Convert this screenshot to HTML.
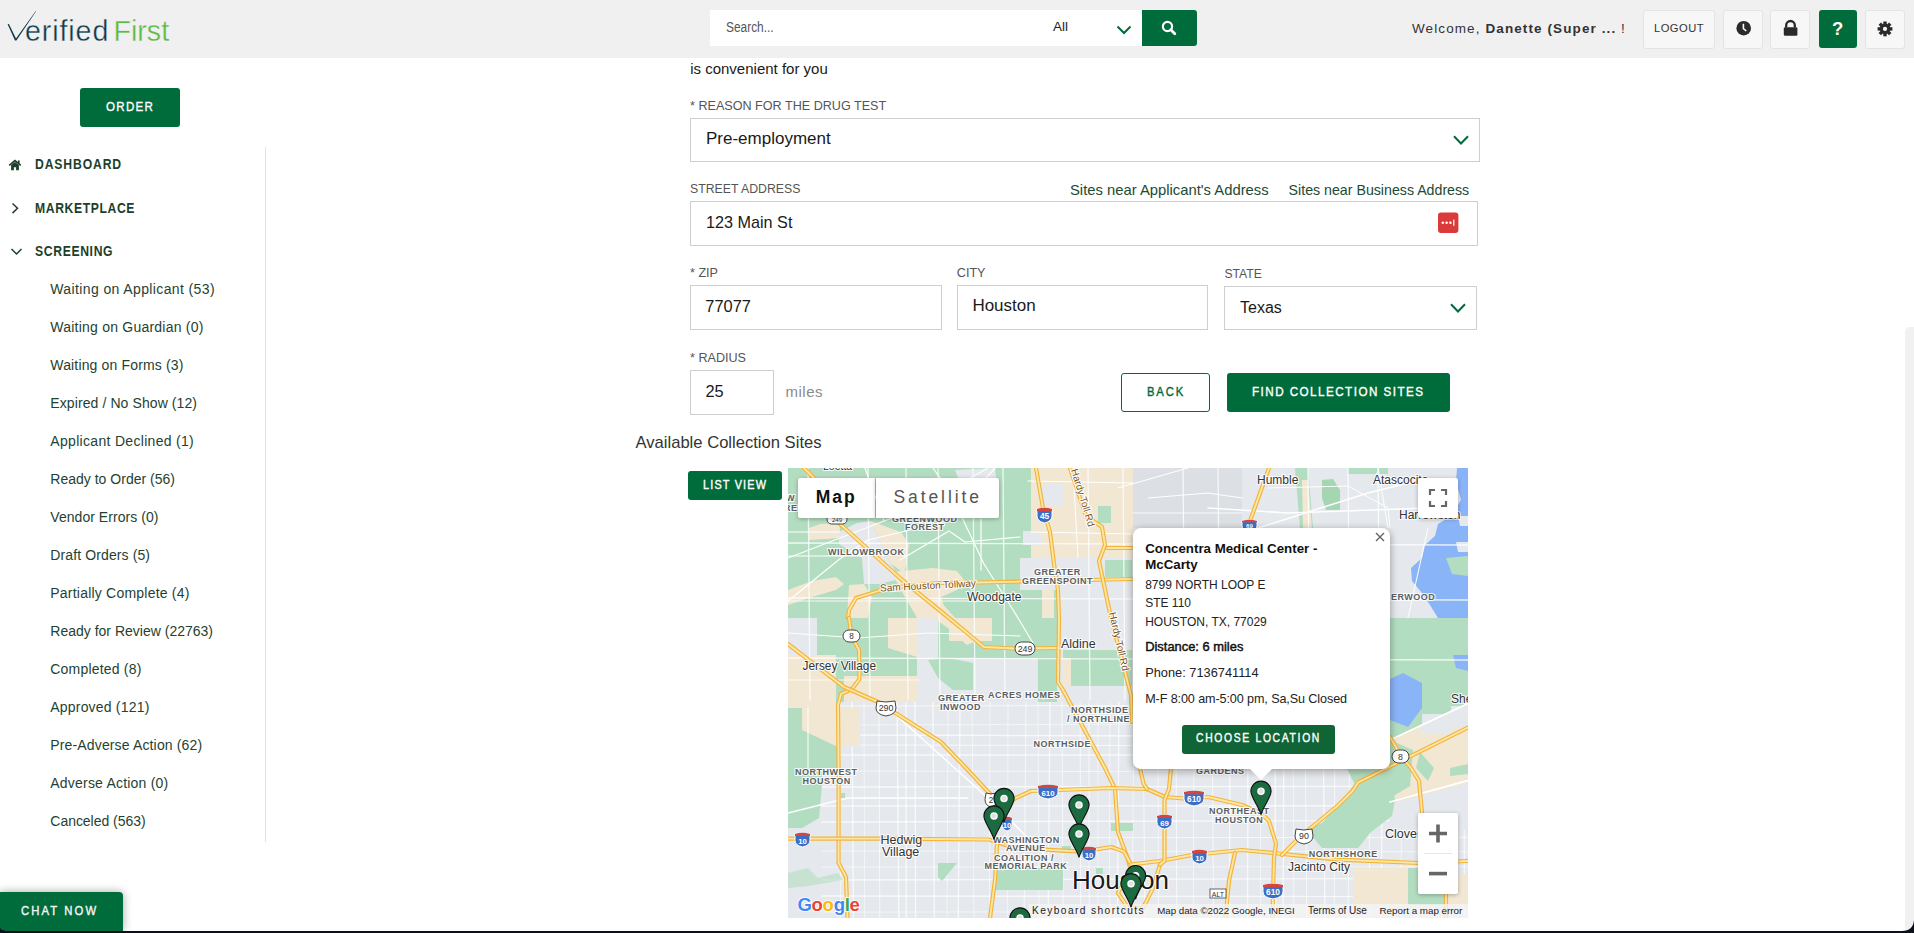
<!DOCTYPE html>
<html><head><meta charset="utf-8"><style>
html,body{margin:0;padding:0;width:1914px;height:933px;overflow:hidden;background:#fff;font-family:"Liberation Sans",sans-serif}
.t{position:absolute;line-height:1;white-space:nowrap}
.r{position:absolute}
</style></head><body>
<div class="r" style="left:0px;top:0px;width:1914px;height:58px;background:#f0f0f0"></div>
<svg class="r" style="left:0;top:0" width="200" height="58"><path d="M7.6 24.3 L8.9 23.9 L16.0 38.6 L35.8 11.0 L36.1 11.3 L16.4 40.6 L15.0 40.6 Z" fill="#0d3a4c"/></svg>
<div class="t" style="left:25px;top:16.79px;font-size:28.6px;color:#0d3a4c;font-weight:normal;letter-spacing:0.9px;-webkit-text-stroke:0.35px #f0f0f0">erified</div>
<div class="t" style="left:113.5px;top:16.79px;font-size:28.6px;color:#5cb946;font-weight:normal;letter-spacing:0px;-webkit-text-stroke:0.35px #f0f0f0">First</div>
<div class="r" style="left:710px;top:10px;width:432px;height:36px;background:#fff"></div>
<div class="t" style="left:726px;top:19.95px;font-size:14px;color:#555;font-weight:normal;letter-spacing:0px;;transform:scaleX(0.85);transform-origin:0 0">Search...</div>
<div class="t" style="left:1053px;top:19.57px;font-size:13.5px;color:#222;font-weight:normal;letter-spacing:0px;">All</div>
<svg class="r" style="left:1110px;top:20px" width="30" height="20"><path d="M7.5 6.5 L14 13 L20.5 6.5" fill="none" stroke="#006b3b" stroke-width="2"/></svg>
<div class="r" style="left:1142px;top:10px;width:55px;height:36px;background:#006b3b;border-radius:0 3px 3px 0"></div>
<svg class="r" style="left:1155px;top:15px" width="30" height="26"><circle cx="12.5" cy="11.5" r="4.6" fill="none" stroke="#fff" stroke-width="2.2"/><path d="M15.8 14.8 L19.8 18.8" stroke="#fff" stroke-width="2.8" stroke-linecap="round"/></svg>
<div class="t" style="left:1412px;top:21.77px;font-size:13.5px;color:#333;font-weight:normal;letter-spacing:1.1px;">Welcome, <b>Danette (Super ...</b> !</div>
<div class="r" style="left:1642.5px;top:9.5px;width:72.0px;height:39.0px;background:#f7f7f7;border:1px solid #e4e4e4;border-radius:3px;box-sizing:border-box"></div>
<div class="t" style="left:1654px;top:22.82px;font-size:11.2px;color:#333;font-weight:normal;letter-spacing:0.45px;">LOGOUT</div>
<div class="r" style="left:1723px;top:9.5px;width:39.5px;height:39.0px;background:#f7f7f7;border:1px solid #e4e4e4;border-radius:3px;box-sizing:border-box"></div>
<svg class="r" style="left:1723.5px;top:10px" width="39" height="38"><circle cx="19.7" cy="18.2" r="7.3" fill="#2a2a2a"/><path d="M19.4 13.8 V18.6 L22.3 21" fill="none" stroke="#f7f7f7" stroke-width="1.6"/></svg>
<div class="r" style="left:1770px;top:9.5px;width:39.5px;height:39.0px;background:#f7f7f7;border:1px solid #e4e4e4;border-radius:3px;box-sizing:border-box"></div>
<svg class="r" style="left:1770.5px;top:10px" width="39" height="38"><path d="M15.2 17.5 V15.3 A4.3 4.3 0 0 1 23.8 15.3 V17.5" fill="none" stroke="#2a2a2a" stroke-width="2.3"/><rect x="12.8" y="17.2" width="13.6" height="8.6" rx="1.4" fill="#2a2a2a"/></svg>
<div class="r" style="left:1819px;top:10px;width:38px;height:38px;background:#006b3b;border-radius:3px"></div>
<div class="t" style="left:1832px;top:19.94px;font-size:18.5px;color:#fff;font-weight:bold;letter-spacing:0px;">?</div>
<div class="r" style="left:1865px;top:9.5px;width:39.5px;height:39.0px;background:#f7f7f7;border:1px solid #e4e4e4;border-radius:3px;box-sizing:border-box"></div>
<svg class="r" style="left:1865.5px;top:10px" width="39" height="38" viewBox="0 0 39 38"><g transform="translate(19,18.9)"><g fill="#2a2a2a"><rect x="-1.7" y="-7.4" width="3.4" height="3.6" transform="rotate(0)"/><rect x="-1.7" y="-7.4" width="3.4" height="3.6" transform="rotate(45)"/><rect x="-1.7" y="-7.4" width="3.4" height="3.6" transform="rotate(90)"/><rect x="-1.7" y="-7.4" width="3.4" height="3.6" transform="rotate(135)"/><rect x="-1.7" y="-7.4" width="3.4" height="3.6" transform="rotate(180)"/><rect x="-1.7" y="-7.4" width="3.4" height="3.6" transform="rotate(225)"/><rect x="-1.7" y="-7.4" width="3.4" height="3.6" transform="rotate(270)"/><rect x="-1.7" y="-7.4" width="3.4" height="3.6" transform="rotate(315)"/><circle r="5.2"/></g><circle r="2.1" fill="#f7f7f7"/></g></svg>
<div class="r" style="left:80px;top:88px;width:100px;height:39px;background:#006b3b;border-radius:3px"></div>
<div class="t" style="left:106.2px;top:100.14px;font-size:13.3px;color:#fff;font-weight:normal;letter-spacing:1.45px;-webkit-text-stroke:0.35px #fff;transform:scaleX(0.87);transform-origin:0 0">ORDER</div>
<svg class="r" style="left:5px;top:155px" width="20" height="20"><path d="M4.2 10.4 L10 5.6 L15.8 10.4" fill="none" stroke="#1c3f2c" stroke-width="1.7"/><rect x="13" y="5.4" width="1.6" height="3" fill="#1c3f2c"/><path d="M6.1 10 V15.2 H8.9 V12.2 H11.1 V15.2 H13.9 V10 L10 6.9 Z" fill="#1c3f2c"/></svg>
<div class="t" style="left:35px;top:157.45px;font-size:14px;color:#1c3f2c;font-weight:bold;letter-spacing:1.0px;;transform:scaleX(0.87);transform-origin:0 0">DASHBOARD</div>
<svg class="r" style="left:6px;top:198px" width="20" height="20"><path d="M6.5 5.5 L11.5 10.3 L6.5 15.1" fill="none" stroke="#1c3f2c" stroke-width="1.5"/></svg>
<div class="t" style="left:35px;top:201.15px;font-size:14px;color:#1c3f2c;font-weight:bold;letter-spacing:0.7px;;transform:scaleX(0.87);transform-origin:0 0">MARKETPLACE</div>
<svg class="r" style="left:6px;top:242px" width="20" height="20"><path d="M5.5 7 L10.5 12 L15.5 7" fill="none" stroke="#1c3f2c" stroke-width="1.5"/></svg>
<div class="t" style="left:35.3px;top:244.15px;font-size:14px;color:#1c3f2c;font-weight:bold;letter-spacing:0.74px;;transform:scaleX(0.87);transform-origin:0 0">SCREENING</div>
<div class="t" style="left:50.3px;top:282.35px;font-size:14px;color:#1f4231;font-weight:normal;letter-spacing:0.383px;">Waiting on Applicant (53)</div>
<div class="t" style="left:50.3px;top:320.35px;font-size:14px;color:#1f4231;font-weight:normal;letter-spacing:0.227px;">Waiting on Guardian (0)</div>
<div class="t" style="left:50.3px;top:358.35px;font-size:14px;color:#1f4231;font-weight:normal;letter-spacing:0.153px;">Waiting on Forms (3)</div>
<div class="t" style="left:50.3px;top:396.35px;font-size:14px;color:#1f4231;font-weight:normal;letter-spacing:0.095px;">Expired / No Show (12)</div>
<div class="t" style="left:50.3px;top:434.35px;font-size:14px;color:#1f4231;font-weight:normal;letter-spacing:0.31px;">Applicant Declined (1)</div>
<div class="t" style="left:50.3px;top:472.35px;font-size:14px;color:#1f4231;font-weight:normal;letter-spacing:0.011px;">Ready to Order (56)</div>
<div class="t" style="left:50.3px;top:510.35px;font-size:14px;color:#1f4231;font-weight:normal;letter-spacing:0.044px;">Vendor Errors (0)</div>
<div class="t" style="left:50.3px;top:548.35px;font-size:14px;color:#1f4231;font-weight:normal;letter-spacing:0.113px;">Draft Orders (5)</div>
<div class="t" style="left:50.3px;top:586.35px;font-size:14px;color:#1f4231;font-weight:normal;letter-spacing:0.214px;">Partially Complete (4)</div>
<div class="t" style="left:50.3px;top:624.35px;font-size:14px;color:#1f4231;font-weight:normal;letter-spacing:0.004px;">Ready for Review (22763)</div>
<div class="t" style="left:50.3px;top:662.35px;font-size:14px;color:#1f4231;font-weight:normal;letter-spacing:0.192px;">Completed (8)</div>
<div class="t" style="left:50.3px;top:700.35px;font-size:14px;color:#1f4231;font-weight:normal;letter-spacing:0.192px;">Approved (121)</div>
<div class="t" style="left:50.3px;top:738.35px;font-size:14px;color:#1f4231;font-weight:normal;letter-spacing:0.145px;">Pre-Adverse Action (62)</div>
<div class="t" style="left:50.3px;top:776.35px;font-size:14px;color:#1f4231;font-weight:normal;letter-spacing:0.206px;">Adverse Action (0)</div>
<div class="t" style="left:50.3px;top:814.35px;font-size:14px;color:#1f4231;font-weight:normal;letter-spacing:-0.031px;">Canceled (563)</div>
<div class="r" style="left:265px;top:147px;width:1px;height:695px;background:#e3e3e3"></div>
<div class="r" style="left:0px;top:892px;width:123px;height:39px;background:#006b3b;border-radius:0 4px 0 0;box-shadow:0 0 10px rgba(0,0,0,0.35)"></div>
<div class="t" style="left:20.8px;top:904.30px;font-size:13px;color:#f4f4f4;font-weight:normal;letter-spacing:2.39px;-webkit-text-stroke:0.4px #f4f4f4;transform:scaleX(0.87);transform-origin:0 0">CHAT NOW</div>
<div class="t" style="left:690.2px;top:61.10px;font-size:15px;color:#1a1a1a;font-weight:normal;letter-spacing:0px;">is convenient for you</div>
<div class="t" style="left:690px;top:99.53px;font-size:12.6px;color:#555;font-weight:normal;letter-spacing:0.0px;">* REASON FOR THE DRUG TEST</div>
<div class="r" style="left:690px;top:118px;width:790px;height:44px;border:1px solid #cfcfcf;box-sizing:border-box;background:#fff"></div>
<div class="t" style="left:706px;top:130.41px;font-size:17px;color:#1a1a1a;font-weight:normal;letter-spacing:0px;">Pre-employment</div>
<svg class="r" style="left:1446px;top:128px" width="30" height="24"><path d="M8 8.3 L15 15.5 L22 8.3" fill="none" stroke="#006b3b" stroke-width="2"/></svg>
<div class="t" style="left:690px;top:182.59px;font-size:12.3px;color:#555;font-weight:normal;letter-spacing:0px;">STREET ADDRESS</div>
<div class="t" style="left:1070px;top:182.87px;font-size:14.8px;color:#1c4a33;font-weight:normal;letter-spacing:0px;">Sites near Applicant's Address</div>
<div class="t" style="left:1288.6px;top:183.38px;font-size:14.2px;color:#1c4a33;font-weight:normal;letter-spacing:0px;">Sites near Business Address</div>
<div class="r" style="left:690px;top:201px;width:788px;height:45px;border:1px solid #cfcfcf;box-sizing:border-box;background:#fff"></div>
<div class="t" style="left:706px;top:213.79px;font-size:16.2px;color:#1a1a1a;font-weight:normal;letter-spacing:0px;">123 Main St</div>
<svg class="r" style="left:1437px;top:212px" width="22" height="22"><rect x="1" y="0.5" width="20.4" height="20.5" rx="3" fill="#d93a3a"/><circle cx="5.8" cy="10.7" r="1.25" fill="#fff"/><circle cx="9.6" cy="10.7" r="1.25" fill="#fff"/><circle cx="13.4" cy="10.7" r="1.25" fill="#fff"/><rect x="16.2" y="7.6" width="1.2" height="6.2" fill="#fff"/></svg>
<div class="t" style="left:690px;top:266.93px;font-size:12.6px;color:#555;font-weight:normal;letter-spacing:0px;">* ZIP</div>
<div class="r" style="left:690px;top:285px;width:252px;height:45px;border:1px solid #cfcfcf;box-sizing:border-box;background:#fff"></div>
<div class="t" style="left:705.3px;top:297.52px;font-size:16.4px;color:#1a1a1a;font-weight:normal;letter-spacing:0px;">77077</div>
<div class="t" style="left:956.8px;top:266.93px;font-size:12.6px;color:#555;font-weight:normal;letter-spacing:0px;">CITY</div>
<div class="r" style="left:957px;top:285px;width:251px;height:45px;border:1px solid #cfcfcf;box-sizing:border-box;background:#fff"></div>
<div class="t" style="left:972.4px;top:297.01px;font-size:17px;color:#1a1a1a;font-weight:normal;letter-spacing:0px;">Houston</div>
<div class="t" style="left:1224.4px;top:267.67px;font-size:12.2px;color:#555;font-weight:normal;letter-spacing:0px;">STATE</div>
<div class="r" style="left:1224px;top:286px;width:253px;height:44px;border:1px solid #cfcfcf;box-sizing:border-box;background:#fff"></div>
<div class="t" style="left:1240px;top:299.76px;font-size:16px;color:#1a1a1a;font-weight:normal;letter-spacing:0px;">Texas</div>
<svg class="r" style="left:1443px;top:296px" width="30" height="24"><path d="M8 8.3 L15 15.5 L22 8.3" fill="none" stroke="#006b3b" stroke-width="2"/></svg>
<div class="t" style="left:690px;top:351.63px;font-size:12.6px;color:#555;font-weight:normal;letter-spacing:0px;">* RADIUS</div>
<div class="r" style="left:690px;top:370px;width:84px;height:45px;border:1px solid #cfcfcf;box-sizing:border-box;background:#fff"></div>
<div class="t" style="left:705.5px;top:382.82px;font-size:16.4px;color:#1a1a1a;font-weight:normal;letter-spacing:0px;">25</div>
<div class="t" style="left:785.5px;top:384.00px;font-size:15px;color:#8a8a8a;font-weight:normal;letter-spacing:0.5px;">miles</div>
<div class="r" style="left:1121px;top:373px;width:89px;height:39px;border:1.5px solid #006b3b;border-radius:3px;box-sizing:border-box;background:#fff"></div>
<div class="t" style="left:1147.2px;top:384.86px;font-size:13.4px;color:#006b3b;font-weight:normal;letter-spacing:2.2px;-webkit-text-stroke:0.4px #006b3b;transform:scaleX(0.84);transform-origin:0 0">BACK</div>
<div class="r" style="left:1227px;top:373px;width:223px;height:39px;background:#006b3b;border-radius:3px"></div>
<div class="t" style="left:1252px;top:384.86px;font-size:13.4px;color:#fff;font-weight:normal;letter-spacing:1.68px;-webkit-text-stroke:0.4px #fff;transform:scaleX(0.87);transform-origin:0 0">FIND COLLECTION SITES</div>
<div class="t" style="left:635.5px;top:435.35px;font-size:16.6px;color:#333;font-weight:normal;letter-spacing:0px;">Available Collection Sites</div>
<div class="r" style="left:688px;top:471px;width:94px;height:29px;background:#006b3b;border-radius:3px"></div>
<div class="t" style="left:703px;top:479.02px;font-size:12.5px;color:#fff;font-weight:normal;letter-spacing:1.35px;-webkit-text-stroke:0.4px #fff;transform:scaleX(0.87);transform-origin:0 0">LIST VIEW</div>
<svg class="r" style="left:788px;top:468px" width="680" height="450" viewBox="0 0 680 450" font-family="Liberation Sans, sans-serif"><rect width="680" height="450" fill="#e5e8ec"/><polyline points="52,234 52.727928546539864,450" fill="none" stroke="#fff" stroke-width="0.8" stroke-linejoin="round" stroke-linecap="round" opacity="0.7"/><polyline points="64,234 65.42560226558702,450" fill="none" stroke="#fff" stroke-width="1.4" stroke-linejoin="round" stroke-linecap="round" opacity="0.7"/><polyline points="76,234 76.68509416865007,450" fill="none" stroke="#fff" stroke-width="0.8" stroke-linejoin="round" stroke-linecap="round" opacity="0.7"/><polyline points="91,234 91.79446348132603,450" fill="none" stroke="#fff" stroke-width="1.0" stroke-linejoin="round" stroke-linecap="round" opacity="0.7"/><polyline points="109,234 110.85853178923625,450" fill="none" stroke="#fff" stroke-width="1.4" stroke-linejoin="round" stroke-linecap="round" opacity="0.7"/><polyline points="118,234 118.2764300138973,450" fill="none" stroke="#fff" stroke-width="1.4" stroke-linejoin="round" stroke-linecap="round" opacity="0.7"/><polyline points="127,234 127.6220447483994,450" fill="none" stroke="#fff" stroke-width="1.4" stroke-linejoin="round" stroke-linecap="round" opacity="0.7"/><polyline points="145,234 146.32643172109343,450" fill="none" stroke="#fff" stroke-width="1.4" stroke-linejoin="round" stroke-linecap="round" opacity="0.7"/><polyline points="160,234 159.06833962455266,450" fill="none" stroke="#fff" stroke-width="0.8" stroke-linejoin="round" stroke-linecap="round" opacity="0.7"/><polyline points="172,234 170.25384230858091,450" fill="none" stroke="#fff" stroke-width="1.4" stroke-linejoin="round" stroke-linecap="round" opacity="0.7"/><polyline points="184,234 185.95922405968633,450" fill="none" stroke="#fff" stroke-width="0.8" stroke-linejoin="round" stroke-linecap="round" opacity="0.7"/><polyline points="202,234 201.37632080318318,450" fill="none" stroke="#fff" stroke-width="0.8" stroke-linejoin="round" stroke-linecap="round" opacity="0.7"/><polyline points="220,234 219.64184730938365,450" fill="none" stroke="#fff" stroke-width="0.8" stroke-linejoin="round" stroke-linecap="round" opacity="0.7"/><polyline points="238,234 236.0805014161435,450" fill="none" stroke="#fff" stroke-width="1.0" stroke-linejoin="round" stroke-linecap="round" opacity="0.7"/><polyline points="250,234 251.07516754910938,450" fill="none" stroke="#fff" stroke-width="0.8" stroke-linejoin="round" stroke-linecap="round" opacity="0.7"/><polyline points="262,234 260.17676024451816,450" fill="none" stroke="#fff" stroke-width="1.4" stroke-linejoin="round" stroke-linecap="round" opacity="0.7"/><polyline points="274,234 275.0465381158871,450" fill="none" stroke="#fff" stroke-width="1.0" stroke-linejoin="round" stroke-linecap="round" opacity="0.7"/><polyline points="292,234 292.87376190979404,450" fill="none" stroke="#fff" stroke-width="1.0" stroke-linejoin="round" stroke-linecap="round" opacity="0.7"/><polyline points="301,234 301.2034057641299,450" fill="none" stroke="#fff" stroke-width="1.0" stroke-linejoin="round" stroke-linecap="round" opacity="0.7"/><polyline points="310,234 310.0216814945922,450" fill="none" stroke="#fff" stroke-width="0.8" stroke-linejoin="round" stroke-linecap="round" opacity="0.7"/><polyline points="322,234 321.23868021390535,450" fill="none" stroke="#fff" stroke-width="0.8" stroke-linejoin="round" stroke-linecap="round" opacity="0.7"/><polyline points="331,234 329.43247722386604,450" fill="none" stroke="#fff" stroke-width="1.4" stroke-linejoin="round" stroke-linecap="round" opacity="0.7"/><polyline points="346,234 344.1255110487013,450" fill="none" stroke="#fff" stroke-width="0.8" stroke-linejoin="round" stroke-linecap="round" opacity="0.7"/><polyline points="355,234 356.88571463250923,450" fill="none" stroke="#fff" stroke-width="1.0" stroke-linejoin="round" stroke-linecap="round" opacity="0.7"/><polyline points="370,234 370.44186849186934,450" fill="none" stroke="#fff" stroke-width="0.8" stroke-linejoin="round" stroke-linecap="round" opacity="0.7"/><polyline points="388,234 388.7589322937261,450" fill="none" stroke="#fff" stroke-width="1.0" stroke-linejoin="round" stroke-linecap="round" opacity="0.7"/><polyline points="406,234 405.2553220796644,450" fill="none" stroke="#fff" stroke-width="0.8" stroke-linejoin="round" stroke-linecap="round" opacity="0.7"/><polyline points="424,234 425.5866385657104,450" fill="none" stroke="#fff" stroke-width="1.0" stroke-linejoin="round" stroke-linecap="round" opacity="0.7"/><polyline points="442,234 441.50700487078456,450" fill="none" stroke="#fff" stroke-width="1.4" stroke-linejoin="round" stroke-linecap="round" opacity="0.7"/><polyline points="460,234 459.5447717798915,450" fill="none" stroke="#fff" stroke-width="1.4" stroke-linejoin="round" stroke-linecap="round" opacity="0.7"/><polyline points="472,234 472.7238833474893,450" fill="none" stroke="#fff" stroke-width="0.8" stroke-linejoin="round" stroke-linecap="round" opacity="0.7"/><polyline points="487,234 487.48050454178104,450" fill="none" stroke="#fff" stroke-width="1.4" stroke-linejoin="round" stroke-linecap="round" opacity="0.7"/><polyline points="496,234 495.0852025279758,450" fill="none" stroke="#fff" stroke-width="1.4" stroke-linejoin="round" stroke-linecap="round" opacity="0.7"/><polyline points="505,234 505.88124500857657,450" fill="none" stroke="#fff" stroke-width="0.8" stroke-linejoin="round" stroke-linecap="round" opacity="0.7"/><polyline points="517,234 518.7457436114873,450" fill="none" stroke="#fff" stroke-width="1.0" stroke-linejoin="round" stroke-linecap="round" opacity="0.7"/><polyline points="535,234 536.9111892657945,450" fill="none" stroke="#fff" stroke-width="1.4" stroke-linejoin="round" stroke-linecap="round" opacity="0.7"/><polyline points="547,234 546.211972551001,450" fill="none" stroke="#fff" stroke-width="1.0" stroke-linejoin="round" stroke-linecap="round" opacity="0.7"/><polyline points="562,234 560.0458299454568,450" fill="none" stroke="#fff" stroke-width="1.0" stroke-linejoin="round" stroke-linecap="round" opacity="0.7"/><polyline points="580,234 581.9498237246264,450" fill="none" stroke="#fff" stroke-width="1.0" stroke-linejoin="round" stroke-linecap="round" opacity="0.7"/><polyline points="595,234 593.0802115612184,450" fill="none" stroke="#fff" stroke-width="1.4" stroke-linejoin="round" stroke-linecap="round" opacity="0.7"/><polyline points="613,234 613.3568125853592,450" fill="none" stroke="#fff" stroke-width="0.8" stroke-linejoin="round" stroke-linecap="round" opacity="0.7"/><polyline points="631,234 629.2403220425109,450" fill="none" stroke="#fff" stroke-width="1.4" stroke-linejoin="round" stroke-linecap="round" opacity="0.7"/><polyline points="646,234 645.329803361483,450" fill="none" stroke="#fff" stroke-width="1.0" stroke-linejoin="round" stroke-linecap="round" opacity="0.7"/><polyline points="664,234 664.7171255921525,450" fill="none" stroke="#fff" stroke-width="1.0" stroke-linejoin="round" stroke-linecap="round" opacity="0.7"/><polyline points="676,234 676.43545567116,450" fill="none" stroke="#fff" stroke-width="1.0" stroke-linejoin="round" stroke-linecap="round" opacity="0.7"/><polyline points="34,238 680,237.20161589346236" fill="none" stroke="#fff" stroke-width="1.0" stroke-linejoin="round" stroke-linecap="round" opacity="0.7"/><polyline points="34,257 680,255.41948690331796" fill="none" stroke="#fff" stroke-width="0.8" stroke-linejoin="round" stroke-linecap="round" opacity="0.7"/><polyline points="34,267 680,268.88549800423556" fill="none" stroke="#fff" stroke-width="1.4" stroke-linejoin="round" stroke-linecap="round" opacity="0.7"/><polyline points="34,277 680,277.940692726714" fill="none" stroke="#fff" stroke-width="1.0" stroke-linejoin="round" stroke-linecap="round" opacity="0.7"/><polyline points="34,287 680,287.00004286237174" fill="none" stroke="#fff" stroke-width="1.4" stroke-linejoin="round" stroke-linecap="round" opacity="0.7"/><polyline points="34,303 680,304.21523068157967" fill="none" stroke="#fff" stroke-width="0.8" stroke-linejoin="round" stroke-linecap="round" opacity="0.7"/><polyline points="34,319 680,318.31114572845087" fill="none" stroke="#fff" stroke-width="1.4" stroke-linejoin="round" stroke-linecap="round" opacity="0.7"/><polyline points="34,338 680,337.74093728213126" fill="none" stroke="#fff" stroke-width="1.4" stroke-linejoin="round" stroke-linecap="round" opacity="0.7"/><polyline points="34,354 680,352.38808957045796" fill="none" stroke="#fff" stroke-width="1.4" stroke-linejoin="round" stroke-linecap="round" opacity="0.7"/><polyline points="34,370 680,369.28786393848503" fill="none" stroke="#fff" stroke-width="1.0" stroke-linejoin="round" stroke-linecap="round" opacity="0.7"/><polyline points="34,383 680,383.6997095892888" fill="none" stroke="#fff" stroke-width="0.8" stroke-linejoin="round" stroke-linecap="round" opacity="0.7"/><polyline points="34,399 680,398.75372293024554" fill="none" stroke="#fff" stroke-width="0.8" stroke-linejoin="round" stroke-linecap="round" opacity="0.7"/><polyline points="34,412 680,410.31979335357875" fill="none" stroke="#fff" stroke-width="1.4" stroke-linejoin="round" stroke-linecap="round" opacity="0.7"/><polyline points="34,428 680,428.60092950517" fill="none" stroke="#fff" stroke-width="1.4" stroke-linejoin="round" stroke-linecap="round" opacity="0.7"/><polyline points="34,444 680,443.8044087371409" fill="none" stroke="#fff" stroke-width="0.8" stroke-linejoin="round" stroke-linecap="round" opacity="0.7"/><polygon points="0,0 243,0 243,122 232,122 232,201 269,201 269,234 50,234 50,278 0,278" fill="#b3ddc0" /><polygon points="0,278 50,278 50,300 34,300 34,317 31,350 14,360 0,360" fill="#b3ddc0" /><polygon points="232,122 269,122 269,201 232,201" fill="#b3ddc0" /><polygon points="21,60 32,56 51,55 53,70 21,72" fill="#f1e7d3" /><polygon points="82,53 113,64 121,76 119,93 116,105 103,96 90,69" fill="#f1e7d3" /><polygon points="51,64 69,55 82,53 90,69 103,96 113,111 90,116 76,116 74,90 51,76" fill="#e5e8ec" /><polygon points="103,104 145,100 169,103 177,113 169,122 153,129 160,150 129,150 117,129" fill="#f1e7d3" /><polygon points="0,122 24,113 48,109 56,116 48,122 24,129 0,137" fill="#f1e7d3" /><polygon points="61,117 76,116 84,129 80,150 59,150" fill="#f1e7d3" /><polygon points="167,2 207,0 208,10 170,10" fill="#e5e8ec" /><polygon points="243,0 345,0 345,90 243,90" fill="#f1e7d3" /><polygon points="254,16 275,16 275,38 254,38" fill="#e5e8ec" /><polygon points="310,38 323,38 323,55 310,55" fill="#b3ddc0" /><polygon points="235,63 254,63 254,77 235,77" fill="#e5e8ec" /><polygon points="232,90 345,90 345,122 232,122" fill="#e5e8ec" /><polygon points="317,92 344,92 344,109 317,109" fill="#b3ddc0" /><polygon points="254,122 266,122 266,150 254,150" fill="#f1e7d3" /><polygon points="345,0 454,0 454,60 345,60" fill="#dcdfe3" /><polygon points="275,182 344,182 344,218 275,218" fill="#b3ddc0" /><polygon points="275,190 283,190 283,218 275,218" fill="#f1e7d3" /><polygon points="0,150 29,150 29,187 0,187" fill="#e5e8ec" /><polygon points="0,187 48,187 48,240 0,240" fill="#f1e7d3" /><polygon points="14,240 72,240 72,278 48,278 14,262" fill="#f1e7d3" /><polygon points="100,150 129,150 129,189 100,180" fill="#f1e7d3" /><polygon points="56,208 133,208 133,234 56,234" fill="#f1e7d3" /><polygon points="129,150 150,150 150,234 129,234" fill="#e5e8ec" /><polygon points="161,150 204,150 204,173 161,173" fill="#f1e7d3" /><polygon points="129,190 250,190 250,234 129,234" fill="#e5e8ec" /><polygon points="140,192 160,190 185,195 185,222 165,222 150,210" fill="#b3ddc0" /><polygon points="113.4,119.7 140,119.7 171.3,154.4 185,156.3 192.8,165.3 188.9,173 178.6,176.9 161.9,161.4 140,146 127.2,135.7" fill="#f1e7d3" /><polygon points="507,0 520,0 525,60 512,60" fill="#b3ddc0" /><polygon points="514,12 520,12 524,60 515,60" fill="#f1e7d3" /><polygon points="534,12 545,11 552,22 552,42 538,42 534,30" fill="#a3d6b1" /><polygon points="560,0 600,0 600,6 560,6" fill="#b3ddc0" /><polygon points="669,0 680,0 680,160 650,150 642,137 634,125 624,113 623,100 634,90 637,77 647,68 650,56 663,48 673,32 668,13" fill="#8ab4f8" /><polygon points="658,90 680,88 680,108 664,106" fill="#b3ddc0" /><polygon points="670,48 680,48 680,58 672,58" fill="#e5e8ec" /><polygon points="668,74 680,74 680,84 670,84" fill="#e5e8ec" /><polygon points="602,150 680,150 680,236 602,272" fill="#b3ddc0" /><polygon points="602,211 615,205 634,215 634,240 620,259 602,252" fill="#8ab4f8" /><polygon points="665,187 680,187 680,203 668,200" fill="#8ab4f8" /><polygon points="602,272 680,236 680,315 602,336" fill="#f1e7d3" /><polygon points="634,246 663,246 663,265 634,265" fill="#e5e8ec" /><polygon points="663,238 682,238 682,259 663,259" fill="#e5e8ec" /><polygon points="602,272 625,282 622,318 602,330" fill="#b3ddc0" /><polygon points="632,284 646,300 640,313 628,300" fill="#b3ddc0" /><polygon points="662,300 680,296 680,306 662,308" fill="#b3ddc0" /><polygon points="602,336 680,315 680,362 602,362" fill="#e5e8ec" /><polygon points="150,395 169,395 154,413 150,409" fill="#b3ddc0" /><polygon points="207,402 227,402 227,422 207,422" fill="#b3ddc0" /><polygon points="227,400 275,400 275,422 227,422" fill="#b3ddc0" /><polygon points="0,405 20,400 30,410 50,405 55,412 20,418 0,420" fill="#b3ddc0" opacity="0.6"/><polygon points="53,325 57,325 57,330 53,330" fill="#b3ddc0" /><polygon points="323,355 345,355 345,363 323,363" fill="#b3ddc0" /><polygon points="274,378 283,378 283,385 274,385" fill="#b3ddc0" /><polygon points="308,400 315,400 315,406 308,406" fill="#b3ddc0" /><polygon points="558.5,300 602,300 607,332 604,348 583,364 570,380 534,380 518,361 534,355 554,332 566.5,316" fill="#b3ddc0" /><polygon points="565,400 631,400 631,437 565,437" fill="#f1e7d3" /><polygon points="620,400 660,400 660,437 620,437" fill="#b3ddc0" /><polygon points="660,410 680,405 680,440 660,440" fill="#f1e7d3" /><polyline points="20,0 22,232" fill="none" stroke="#fff" stroke-width="1.3" stroke-linejoin="round" stroke-linecap="round" opacity="0.8"/><polyline points="80,0 82,232" fill="none" stroke="#fff" stroke-width="1.3" stroke-linejoin="round" stroke-linecap="round" opacity="0.8"/><polyline points="118,0 120,232" fill="none" stroke="#fff" stroke-width="1.3" stroke-linejoin="round" stroke-linecap="round" opacity="0.8"/><polyline points="150,0 152,232" fill="none" stroke="#fff" stroke-width="1.3" stroke-linejoin="round" stroke-linecap="round" opacity="0.8"/><polyline points="185,0 187,232" fill="none" stroke="#fff" stroke-width="1.3" stroke-linejoin="round" stroke-linecap="round" opacity="0.8"/><polyline points="215,0 217,232" fill="none" stroke="#fff" stroke-width="1.3" stroke-linejoin="round" stroke-linecap="round" opacity="0.8"/><polyline points="300,0 302,232" fill="none" stroke="#fff" stroke-width="1.3" stroke-linejoin="round" stroke-linecap="round" opacity="0.8"/><polyline points="335,0 337,232" fill="none" stroke="#fff" stroke-width="1.3" stroke-linejoin="round" stroke-linecap="round" opacity="0.8"/><polyline points="395,0 397,232" fill="none" stroke="#fff" stroke-width="1.3" stroke-linejoin="round" stroke-linecap="round" opacity="0.8"/><polyline points="430,0 432,232" fill="none" stroke="#fff" stroke-width="1.3" stroke-linejoin="round" stroke-linecap="round" opacity="0.8"/><polyline points="520,0 522,232" fill="none" stroke="#fff" stroke-width="1.3" stroke-linejoin="round" stroke-linecap="round" opacity="0.8"/><polyline points="560,0 562,232" fill="none" stroke="#fff" stroke-width="1.3" stroke-linejoin="round" stroke-linecap="round" opacity="0.8"/><polyline points="590,0 592,232" fill="none" stroke="#fff" stroke-width="1.3" stroke-linejoin="round" stroke-linecap="round" opacity="0.8"/><polyline points="0,75 680,77" fill="none" stroke="#fff" stroke-width="1.3" stroke-linejoin="round" stroke-linecap="round" opacity="0.8"/><polyline points="0,130 680,132" fill="none" stroke="#fff" stroke-width="1.3" stroke-linejoin="round" stroke-linecap="round" opacity="0.8"/><polyline points="0,190 680,192" fill="none" stroke="#fff" stroke-width="1.3" stroke-linejoin="round" stroke-linecap="round" opacity="0.8"/><polyline points="0,90 130,40 200,0" fill="none" stroke="#fff" stroke-width="1.1" stroke-linejoin="round" stroke-linecap="round" /><polyline points="0,133 53,90 80,72 160,53 207,0" fill="none" stroke="#fff" stroke-width="1.2" stroke-linejoin="round" stroke-linecap="round" /><polyline points="470,60 580,25 640,10" fill="none" stroke="#fff" stroke-width="1.5" stroke-linejoin="round" stroke-linecap="round" /><polyline points="420,40 500,45 640,40" fill="none" stroke="#fff" stroke-width="1.5" stroke-linejoin="round" stroke-linecap="round" /><polyline points="0,345 60,330 180,330" fill="none" stroke="#fff" stroke-width="1.3" stroke-linejoin="round" stroke-linecap="round" /><polyline points="100,240 200,330 260,390" fill="none" stroke="#fff" stroke-width="1.4" stroke-linejoin="round" stroke-linecap="round" /><polyline points="603,271.5 682,234.5" fill="none" stroke="#fff" stroke-width="1.8" stroke-linejoin="round" stroke-linecap="round" /><polyline points="0,64 51,64" fill="none" stroke="#fff" stroke-width="1.2" stroke-linejoin="round" stroke-linecap="round" /><polyline points="0,88 74,88" fill="none" stroke="#fff" stroke-width="1.2" stroke-linejoin="round" stroke-linecap="round" /><polyline points="77,0 96,53" fill="none" stroke="#fff" stroke-width="1.2" stroke-linejoin="round" stroke-linecap="round" /><polyline points="145,0 162,24 196,96 227,145 245,175" fill="none" stroke="#fff" stroke-width="1.2" stroke-linejoin="round" stroke-linecap="round" /><polyline points="112,92 161,63 177,74 232,69" fill="none" stroke="#fff" stroke-width="1.2" stroke-linejoin="round" stroke-linecap="round" /><polyline points="193,51 193,102" fill="none" stroke="#fff" stroke-width="1.2" stroke-linejoin="round" stroke-linecap="round" /><polyline points="0,133 232,133" fill="none" stroke="#fff" stroke-width="1.0" stroke-linejoin="round" stroke-linecap="round" opacity="0.8"/><polyline points="240,13 345,15" fill="none" stroke="#fff" stroke-width="1.2" stroke-linejoin="round" stroke-linecap="round" /><polyline points="243,64 345,66" fill="none" stroke="#fff" stroke-width="1.2" stroke-linejoin="round" stroke-linecap="round" /><polyline points="285,0 290,90" fill="none" stroke="#fff" stroke-width="1.0" stroke-linejoin="round" stroke-linecap="round" /><polyline points="330,20 400,0" fill="none" stroke="#fff" stroke-width="1.0" stroke-linejoin="round" stroke-linecap="round" /><polyline points="360,30 420,25 454,30" fill="none" stroke="#fff" stroke-width="1.2" stroke-linejoin="round" stroke-linecap="round" /><polyline points="345,45 454,45" fill="none" stroke="#fff" stroke-width="1.0" stroke-linejoin="round" stroke-linecap="round" opacity="0.8"/><polyline points="480,20 560,18 600,40 602,60" fill="none" stroke="#fff" stroke-width="1.0" stroke-linejoin="round" stroke-linecap="round" /><polyline points="590,0 600,60" fill="none" stroke="#fff" stroke-width="1.0" stroke-linejoin="round" stroke-linecap="round" /><polyline points="640,60 620,150" fill="none" stroke="#fff" stroke-width="1.0" stroke-linejoin="round" stroke-linecap="round" /><polyline points="0,165 70,170 140,165 232,168" fill="none" stroke="#fff" stroke-width="1.0" stroke-linejoin="round" stroke-linecap="round" /><polyline points="20,240 20,300" fill="none" stroke="#fff" stroke-width="1.0" stroke-linejoin="round" stroke-linecap="round" /><polyline points="0,212 130,212" fill="none" stroke="#fff" stroke-width="1.0" stroke-linejoin="round" stroke-linecap="round" opacity="0.8"/><polyline points="602,334 682,312" fill="none" stroke="#fff" stroke-width="1.8" stroke-linejoin="round" stroke-linecap="round" /><polyline points="16,0 27,11 51,55 113,111 161,150 196,179 227,180.5 270,180" fill="none" stroke="#f4b43c" stroke-width="4.2" stroke-linejoin="round" stroke-linecap="round" /><polyline points="16,0 27,11 51,55 113,111 161,150 196,179 227,180.5 270,180" fill="none" stroke="#fde7a5" stroke-width="1.8000000000000003" stroke-linejoin="round" stroke-linecap="round" /><polyline points="60,150 61,142 68,130 100,120 150,115 190,114.5 344,111" fill="none" stroke="#f4b43c" stroke-width="4.2" stroke-linejoin="round" stroke-linecap="round" /><polyline points="60,150 61,142 68,130 100,120 150,115 190,114.5 344,111" fill="none" stroke="#fde7a5" stroke-width="1.8000000000000003" stroke-linejoin="round" stroke-linecap="round" /><polyline points="319,80 344,80" fill="none" stroke="#f4b43c" stroke-width="4.2" stroke-linejoin="round" stroke-linecap="round" /><polyline points="319,80 344,80" fill="none" stroke="#fde7a5" stroke-width="1.8000000000000003" stroke-linejoin="round" stroke-linecap="round" /><polyline points="248,0 255,40 262,64 266,96 270,122 271,150 270,214 275,222 317,300 327,321 330,364 339.5,390 343,403 335,415 330,425 340,440 355,440 365,420 372,396.5" fill="none" stroke="#f4b43c" stroke-width="4.2" stroke-linejoin="round" stroke-linecap="round" /><polyline points="248,0 255,40 262,64 266,96 270,122 271,150 270,214 275,222 317,300 327,321 330,364 339.5,390 343,403 335,415 330,425 340,440 355,440 365,420 372,396.5" fill="none" stroke="#fde7a5" stroke-width="1.8000000000000003" stroke-linejoin="round" stroke-linecap="round" /><polyline points="282,0 298,48 314,59 317,77 311,93 323,150 343,227 344,254" fill="none" stroke="#f4b43c" stroke-width="4.2" stroke-linejoin="round" stroke-linecap="round" /><polyline points="282,0 298,48 314,59 317,77 311,93 323,150 343,227 344,254" fill="none" stroke="#fde7a5" stroke-width="1.8000000000000003" stroke-linejoin="round" stroke-linecap="round" /><polyline points="481,0 462,53" fill="none" stroke="#f4b43c" stroke-width="4.2" stroke-linejoin="round" stroke-linecap="round" /><polyline points="481,0 462,53" fill="none" stroke="#fde7a5" stroke-width="1.8000000000000003" stroke-linejoin="round" stroke-linecap="round" /><polyline points="61,150 63.5,168 71,182 71.5,211 64,221 53,226 50,237 50.6,300 50.6,395 58,409 59.5,450" fill="none" stroke="#f4b43c" stroke-width="4.2" stroke-linejoin="round" stroke-linecap="round" /><polyline points="61,150 63.5,168 71,182 71.5,211 64,221 53,226 50,237 50.6,300 50.6,395 58,409 59.5,450" fill="none" stroke="#fde7a5" stroke-width="1.8000000000000003" stroke-linejoin="round" stroke-linecap="round" /><polyline points="0,176 56,219 90,234 153,274 178,300 203,327 210,336" fill="none" stroke="#f4b43c" stroke-width="4.2" stroke-linejoin="round" stroke-linecap="round" /><polyline points="0,176 56,219 90,234 153,274 178,300 203,327 210,336" fill="none" stroke="#fde7a5" stroke-width="1.8000000000000003" stroke-linejoin="round" stroke-linecap="round" /><polyline points="0,370.7 90,370.7 201,371.5 227,380 294.5,383.6 323.5,379 336,383.6 343,396.5" fill="none" stroke="#f4b43c" stroke-width="4.2" stroke-linejoin="round" stroke-linecap="round" /><polyline points="0,370.7 90,370.7 201,371.5 227,380 294.5,383.6 323.5,379 336,383.6 343,396.5" fill="none" stroke="#fde7a5" stroke-width="1.8000000000000003" stroke-linejoin="round" stroke-linecap="round" /><polyline points="343,396.5 372,393 404,387 454,382 486,385 518,388.4 550.5,391.6 631,395 680,393" fill="none" stroke="#f4b43c" stroke-width="4.2" stroke-linejoin="round" stroke-linecap="round" /><polyline points="343,396.5 372,393 404,387 454,382 486,385 518,388.4 550.5,391.6 631,395 680,393" fill="none" stroke="#fde7a5" stroke-width="1.8000000000000003" stroke-linejoin="round" stroke-linecap="round" /><polyline points="209,377 207,412 202,450" fill="none" stroke="#f4b43c" stroke-width="4.2" stroke-linejoin="round" stroke-linecap="round" /><polyline points="209,377 207,412 202,450" fill="none" stroke="#fde7a5" stroke-width="1.8000000000000003" stroke-linejoin="round" stroke-linecap="round" /><polyline points="207,340 227,330.5 243,323 323.5,320 359,321 377,329 396,330.5 420,329 433,332 454,337 473,345 481,353 488,375.5 486,390 484.5,450" fill="none" stroke="#f4b43c" stroke-width="4.2" stroke-linejoin="round" stroke-linecap="round" /><polyline points="207,340 227,330.5 243,323 323.5,320 359,321 377,329 396,330.5 420,329 433,332 454,337 473,345 481,353 488,375.5 486,390 484.5,450" fill="none" stroke="#fde7a5" stroke-width="1.8000000000000003" stroke-linejoin="round" stroke-linecap="round" /><polyline points="352,300 355.6,316 359,321" fill="none" stroke="#f4b43c" stroke-width="4.2" stroke-linejoin="round" stroke-linecap="round" /><polyline points="352,300 355.6,316 359,321" fill="none" stroke="#fde7a5" stroke-width="1.8000000000000003" stroke-linejoin="round" stroke-linecap="round" /><polyline points="383,300 381,321 376.5,332 376.5,393 372,396.5" fill="none" stroke="#f4b43c" stroke-width="4.2" stroke-linejoin="round" stroke-linecap="round" /><polyline points="383,300 381,321 376.5,332 376.5,393 372,396.5" fill="none" stroke="#fde7a5" stroke-width="1.8000000000000003" stroke-linejoin="round" stroke-linecap="round" /><polyline points="447,385 441,412.5 437.6,450" fill="none" stroke="#f4b43c" stroke-width="4.2" stroke-linejoin="round" stroke-linecap="round" /><polyline points="447,385 441,412.5 437.6,450" fill="none" stroke="#fde7a5" stroke-width="1.8000000000000003" stroke-linejoin="round" stroke-linecap="round" /><polyline points="494,387 507,374 521.5,361 550.5,337 565,322.5 570,314.5 599,300 681,259" fill="none" stroke="#f4b43c" stroke-width="4.2" stroke-linejoin="round" stroke-linecap="round" /><polyline points="494,387 507,374 521.5,361 550.5,337 565,322.5 570,314.5 599,300 681,259" fill="none" stroke="#fde7a5" stroke-width="1.8000000000000003" stroke-linejoin="round" stroke-linecap="round" /><polyline points="602,269 613,288 623,300 631,313 634,345 634,395" fill="none" stroke="#f4b43c" stroke-width="4.2" stroke-linejoin="round" stroke-linecap="round" /><polyline points="602,269 613,288 623,300 631,313 634,345 634,395" fill="none" stroke="#fde7a5" stroke-width="1.8000000000000003" stroke-linejoin="round" stroke-linecap="round" /><polyline points="658,425 658,450" fill="none" stroke="#f4b43c" stroke-width="4.2" stroke-linejoin="round" stroke-linecap="round" /><polyline points="658,425 658,450" fill="none" stroke="#fde7a5" stroke-width="1.8000000000000003" stroke-linejoin="round" stroke-linecap="round" /><path d="M249,41 Q256.5,38.5 264,41 L264,47.8 Q264,53.4 256.5,55 Q249,53.4 249,47.8 Z" fill="#3b6fc6" stroke="#fff" stroke-width="1"/><path d="M249,41 Q256.5,38.5 264,41 L264,43.32 L249,43.32 Z" fill="#d6453d"/><text x="256.5" y="51.480000000000004" font-size="8.3" fill="#fff" font-weight="bold" text-anchor="middle">45</text><rect x="39" y="47" width="20" height="9" rx="4.5" fill="#fff" stroke="#444" stroke-width="1"/><text x="49.0" y="53.84" font-size="6.1" fill="#333" text-anchor="middle">249</text><rect x="227" y="174" width="20" height="13" rx="6.5" fill="#fff" stroke="#444" stroke-width="1"/><text x="237.0" y="183.88" font-size="8.8" fill="#333" text-anchor="middle">249</text><rect x="55" y="162" width="17" height="12" rx="6.0" fill="#fff" stroke="#444" stroke-width="1"/><text x="63.5" y="171.12" font-size="8.2" fill="#333" text-anchor="middle">8</text><rect x="604" y="282" width="17" height="13" rx="6.5" fill="#fff" stroke="#444" stroke-width="1"/><text x="612.5" y="291.88" font-size="8.8" fill="#333" text-anchor="middle">8</text><path d="M89,233 Q98.0,235 107,233 L108,240.0 Q108,246.4 98.0,248 Q88,246.4 88,240.0 Z" fill="#fff" stroke="#444" stroke-width="1"/><text x="98.0" y="243.2" font-size="8.8" fill="#333" text-anchor="middle">290</text><path d="M198,325 Q203.0,327 208,325 L209,331.5 Q209,337.5 203.0,339 Q197,337.5 197,331.5 Z" fill="#fff" stroke="#444" stroke-width="1"/><text x="203.0" y="334.5" font-size="8.2" fill="#333" text-anchor="middle">2</text><path d="M454,53 Q461.5,50.5 469,53 L469,57.6 Q469,61.8 461.5,63 Q454,61.8 454,57.6 Z" fill="#3b6fc6" stroke="#fff" stroke-width="1"/><path d="M454,53 Q461.5,50.5 469,53 L469,54.24 L454,54.24 Z" fill="#d6453d"/><text x="461.5" y="60.36" font-size="6.2" fill="#fff" font-weight="bold" text-anchor="middle">69</text><path d="M7,366 Q14.5,363.5 22,366 L22,372.25 Q22,377.5 14.5,379 Q7,377.5 7,372.25 Z" fill="#3b6fc6" stroke="#fff" stroke-width="1"/><path d="M7,366 Q14.5,363.5 22,366 L22,368.05 L7,368.05 Z" fill="#d6453d"/><text x="14.5" y="375.7" font-size="7.8" fill="#fff" font-weight="bold" text-anchor="middle">10</text><path d="M294,380 Q301.0,377.5 308,380 L308,386.25 Q308,391.5 301.0,393 Q294,391.5 294,386.25 Z" fill="#3b6fc6" stroke="#fff" stroke-width="1"/><path d="M294,380 Q301.0,377.5 308,380 L308,382.05 L294,382.05 Z" fill="#d6453d"/><text x="301.0" y="389.7" font-size="7.8" fill="#fff" font-weight="bold" text-anchor="middle">10</text><path d="M404,383 Q411.5,380.5 419,383 L419,389.25 Q419,394.5 411.5,396 Q404,394.5 404,389.25 Z" fill="#3b6fc6" stroke="#fff" stroke-width="1"/><path d="M404,383 Q411.5,380.5 419,383 L419,385.05 L404,385.05 Z" fill="#d6453d"/><text x="411.5" y="392.7" font-size="7.8" fill="#fff" font-weight="bold" text-anchor="middle">10</text><path d="M214,350 Q219.0,347.5 224,350 L224,356.25 Q224,361.5 219.0,363 Q214,361.5 214,356.25 Z" fill="#3b6fc6" stroke="#fff" stroke-width="1"/><path d="M214,350 Q219.0,347.5 224,350 L224,352.05 L214,352.05 Z" fill="#d6453d"/><text x="219.0" y="359.7" font-size="7.8" fill="#fff" font-weight="bold" text-anchor="middle">10</text><path d="M250,318 Q260.0,315.5 270,318 L270,324.25 Q270,329.5 260.0,331 Q250,329.5 250,324.25 Z" fill="#3b6fc6" stroke="#fff" stroke-width="1"/><path d="M250,318 Q260.0,315.5 270,318 L270,320.05 L250,320.05 Z" fill="#d6453d"/><text x="260.0" y="327.7" font-size="7.8" fill="#fff" font-weight="bold" text-anchor="middle">610</text><path d="M396,324 Q406.0,321.5 416,324 L416,330.8 Q416,336.4 406.0,338 Q396,336.4 396,330.8 Z" fill="#3b6fc6" stroke="#fff" stroke-width="1"/><path d="M396,324 Q406.0,321.5 416,324 L416,326.32 L396,326.32 Z" fill="#d6453d"/><text x="406.0" y="334.48" font-size="8.3" fill="#fff" font-weight="bold" text-anchor="middle">610</text><path d="M475,417 Q485.0,414.5 495,417 L495,423.8 Q495,429.4 485.0,431 Q475,429.4 475,423.8 Z" fill="#3b6fc6" stroke="#fff" stroke-width="1"/><path d="M475,417 Q485.0,414.5 495,417 L495,419.32 L475,419.32 Z" fill="#d6453d"/><text x="485.0" y="427.48" font-size="8.3" fill="#fff" font-weight="bold" text-anchor="middle">610</text><path d="M369,348 Q376.5,345.5 384,348 L384,354.25 Q384,359.5 376.5,361 Q369,359.5 369,354.25 Z" fill="#3b6fc6" stroke="#fff" stroke-width="1"/><path d="M369,348 Q376.5,345.5 384,348 L384,350.05 L369,350.05 Z" fill="#d6453d"/><text x="376.5" y="357.7" font-size="7.8" fill="#fff" font-weight="bold" text-anchor="middle">69</text><path d="M508,361 Q516.0,363 524,361 L525,368.0 Q525,374.4 516.0,376 Q507,374.4 507,368.0 Z" fill="#fff" stroke="#444" stroke-width="1"/><text x="516.0" y="371.2" font-size="8.8" fill="#333" text-anchor="middle">90</text><rect x="422" y="421" width="16" height="9" fill="#fff" stroke="#444" stroke-width="0.8"/><text x="430" y="428.5" font-size="7" fill="#333" text-anchor="middle">ALT</text><text x="0" y="0" font-size="10" fill="#7a5320" transform="translate(283,2) rotate(73)" stroke="#fff" stroke-width="2" paint-order="stroke">Hardy Toll Rd</text><text x="0" y="0" font-size="10" fill="#7a5320" transform="translate(321,145) rotate(77)" stroke="#fff" stroke-width="2" paint-order="stroke">Hardy Toll Rd</text><text x="35" y="2" font-size="10.5" fill="#333" font-weight="normal" letter-spacing="0" text-anchor="start" stroke="#fff" stroke-width="2.2" stroke-opacity="0.85" paint-order="stroke" >Loetta</text><text x="-2" y="33" font-size="9" fill="#5b5f63" font-weight="bold" letter-spacing="0.5" text-anchor="start" stroke="#fff" stroke-width="2.2" stroke-opacity="0.85" paint-order="stroke" >W</text><text x="-4" y="43" font-size="9" fill="#5b5f63" font-weight="bold" letter-spacing="0.5" text-anchor="start" stroke="#fff" stroke-width="2.2" stroke-opacity="0.85" paint-order="stroke" >RE</text><text x="104" y="54" font-size="9" fill="#5b5f63" font-weight="bold" letter-spacing="0.5" text-anchor="start" stroke="#fff" stroke-width="2.2" stroke-opacity="0.85" paint-order="stroke" >GREENWOOD</text><text x="117" y="62" font-size="9" fill="#5b5f63" font-weight="bold" letter-spacing="0.5" text-anchor="start" stroke="#fff" stroke-width="2.2" stroke-opacity="0.85" paint-order="stroke" >FOREST</text><text x="40" y="87" font-size="9" fill="#5b5f63" font-weight="bold" letter-spacing="0.5" text-anchor="start" stroke="#fff" stroke-width="2.2" stroke-opacity="0.85" paint-order="stroke" >WILLOWBROOK</text><text x="92" y="121" font-size="10" fill="#7a5320" font-weight="normal" letter-spacing="0" text-anchor="start" stroke="#fff" stroke-width="2.2" stroke-opacity="0.85" paint-order="stroke" transform="rotate(-3 140 117)">Sam Houston Tollway</text><text x="179" y="133" font-size="12" fill="#333" font-weight="normal" letter-spacing="0" text-anchor="start" stroke="#fff" stroke-width="2.2" stroke-opacity="0.85" paint-order="stroke" >Woodgate</text><text x="246" y="107" font-size="9" fill="#5b5f63" font-weight="bold" letter-spacing="0.5" text-anchor="start" stroke="#fff" stroke-width="2.2" stroke-opacity="0.85" paint-order="stroke" >GREATER</text><text x="234" y="116" font-size="9" fill="#5b5f63" font-weight="bold" letter-spacing="0.5" text-anchor="start" stroke="#fff" stroke-width="2.2" stroke-opacity="0.85" paint-order="stroke" >GREENSPOINT</text><text x="14.5" y="202" font-size="11.85" fill="#333" font-weight="normal" letter-spacing="0" text-anchor="start" stroke="#fff" stroke-width="2.2" stroke-opacity="0.85" paint-order="stroke" >Jersey Village</text><text x="273" y="180" font-size="12.5" fill="#333" font-weight="normal" letter-spacing="0" text-anchor="start" stroke="#fff" stroke-width="2.2" stroke-opacity="0.85" paint-order="stroke" >Aldine</text><text x="150" y="233" font-size="9" fill="#5b5f63" font-weight="bold" letter-spacing="0.5" text-anchor="start" stroke="#fff" stroke-width="2.2" stroke-opacity="0.85" paint-order="stroke" >GREATER</text><text x="152" y="242" font-size="9" fill="#5b5f63" font-weight="bold" letter-spacing="0.5" text-anchor="start" stroke="#fff" stroke-width="2.2" stroke-opacity="0.85" paint-order="stroke" >INWOOD</text><text x="200" y="230" font-size="9" fill="#5b5f63" font-weight="bold" letter-spacing="0.5" text-anchor="start" stroke="#fff" stroke-width="2.2" stroke-opacity="0.85" paint-order="stroke" >ACRES HOMES</text><text x="283" y="245" font-size="9" fill="#5b5f63" font-weight="bold" letter-spacing="0.5" text-anchor="start" stroke="#fff" stroke-width="2.2" stroke-opacity="0.85" paint-order="stroke" >NORTHSIDE</text><text x="279" y="254" font-size="9" fill="#5b5f63" font-weight="bold" letter-spacing="0.5" text-anchor="start" stroke="#fff" stroke-width="2.2" stroke-opacity="0.85" paint-order="stroke" >/ NORTHLINE</text><text x="245.5" y="279" font-size="9" fill="#5b5f63" font-weight="bold" letter-spacing="0.5" text-anchor="start" stroke="#fff" stroke-width="2.2" stroke-opacity="0.85" paint-order="stroke" >NORTHSIDE</text><text x="7" y="307" font-size="9" fill="#5b5f63" font-weight="bold" letter-spacing="0.5" text-anchor="start" stroke="#fff" stroke-width="2.2" stroke-opacity="0.85" paint-order="stroke" >NORTHWEST</text><text x="14.5" y="316" font-size="9" fill="#5b5f63" font-weight="bold" letter-spacing="0.5" text-anchor="start" stroke="#fff" stroke-width="2.2" stroke-opacity="0.85" paint-order="stroke" >HOUSTON</text><text x="92.5" y="375.6" font-size="12.5" fill="#333" font-weight="normal" letter-spacing="0" text-anchor="start" stroke="#fff" stroke-width="2.2" stroke-opacity="0.85" paint-order="stroke" >Hedwig</text><text x="94" y="387.6" font-size="12.5" fill="#333" font-weight="normal" letter-spacing="0" text-anchor="start" stroke="#fff" stroke-width="2.2" stroke-opacity="0.85" paint-order="stroke" >Village</text><text x="205" y="374.5" font-size="9" fill="#5b5f63" font-weight="bold" letter-spacing="0.5" text-anchor="start" stroke="#fff" stroke-width="2.2" stroke-opacity="0.85" paint-order="stroke" >WASHINGTON</text><text x="218" y="383" font-size="9" fill="#5b5f63" font-weight="bold" letter-spacing="0.5" text-anchor="start" stroke="#fff" stroke-width="2.2" stroke-opacity="0.85" paint-order="stroke" >AVENUE</text><text x="206" y="392.6" font-size="9" fill="#5b5f63" font-weight="bold" letter-spacing="0.5" text-anchor="start" stroke="#fff" stroke-width="2.2" stroke-opacity="0.85" paint-order="stroke" >COALITION /</text><text x="196.5" y="401" font-size="9" fill="#5b5f63" font-weight="bold" letter-spacing="0.5" text-anchor="start" stroke="#fff" stroke-width="2.2" stroke-opacity="0.85" paint-order="stroke" >MEMORIAL PARK</text><text x="284" y="421" font-size="26" fill="#1a1a1a" font-weight="normal" letter-spacing="0" text-anchor="start" stroke="#fff" stroke-width="2.2" stroke-opacity="0.85" paint-order="stroke" style="-webkit-text-stroke:0.6px #1a1a1a">Houston</text><text x="421" y="345.6" font-size="9" fill="#5b5f63" font-weight="bold" letter-spacing="0.5" text-anchor="start" stroke="#fff" stroke-width="2.2" stroke-opacity="0.85" paint-order="stroke" >NORTHEAST</text><text x="427" y="355" font-size="9" fill="#5b5f63" font-weight="bold" letter-spacing="0.5" text-anchor="start" stroke="#fff" stroke-width="2.2" stroke-opacity="0.85" paint-order="stroke" >HOUSTON</text><text x="520.7" y="389" font-size="9" fill="#5b5f63" font-weight="bold" letter-spacing="0.5" text-anchor="start" stroke="#fff" stroke-width="2.2" stroke-opacity="0.85" paint-order="stroke" >NORTHSHORE</text><text x="500" y="403" font-size="12" fill="#333" font-weight="normal" letter-spacing="0" text-anchor="start" stroke="#fff" stroke-width="2.2" stroke-opacity="0.85" paint-order="stroke" >Jacinto City</text><text x="597" y="370" font-size="12.5" fill="#333" font-weight="normal" letter-spacing="0" text-anchor="start" stroke="#fff" stroke-width="2.2" stroke-opacity="0.85" paint-order="stroke" >Clover</text><text x="663" y="235" font-size="12" fill="#333" font-weight="normal" letter-spacing="0" text-anchor="start" stroke="#fff" stroke-width="2.2" stroke-opacity="0.85" paint-order="stroke" >She</text><text x="469" y="15.5" font-size="12" fill="#333" font-weight="normal" letter-spacing="0" text-anchor="start" stroke="#fff" stroke-width="2.2" stroke-opacity="0.85" paint-order="stroke" >Humble</text><text x="585" y="15.5" font-size="12" fill="#333" font-weight="normal" letter-spacing="0" text-anchor="start" stroke="#fff" stroke-width="2.2" stroke-opacity="0.85" paint-order="stroke" >Atascocita</text><text x="611" y="51" font-size="12" fill="#333" font-weight="normal" letter-spacing="0" text-anchor="start" stroke="#fff" stroke-width="2.2" stroke-opacity="0.85" paint-order="stroke" >Harrowston</text><text x="603" y="132" font-size="9" fill="#5b5f63" font-weight="bold" letter-spacing="0.5" text-anchor="start" stroke="#fff" stroke-width="2.2" stroke-opacity="0.85" paint-order="stroke" >ERWOOD</text><text x="408" y="306" font-size="9" fill="#5b5f63" font-weight="bold" letter-spacing="0.5" text-anchor="start" stroke="#fff" stroke-width="2.2" stroke-opacity="0.85" paint-order="stroke" >GARDENS</text></svg>
<div class="r" style="left:798px;top:478px;width:77px;height:40px;background:#fff;border-radius:2px;box-shadow:0 1px 4px rgba(0,0,0,0.3);border-radius:2px 0 0 2px"></div>
<div class="r" style="left:876px;top:478px;width:123px;height:40px;background:#fff;border-radius:2px;box-shadow:0 1px 4px rgba(0,0,0,0.3);border-radius:0 2px 2px 0"></div>
<div class="t" style="left:815.8px;top:489.39px;font-size:17.5px;color:#111;font-weight:bold;letter-spacing:2.0px;">Map</div>
<div class="t" style="left:893.5px;top:489.39px;font-size:17.5px;color:#555;font-weight:normal;letter-spacing:2.9px;">Satellite</div>
<div class="r" style="left:1418px;top:478px;width:40px;height:40px;background:#fff;border-radius:2px;box-shadow:0 1px 4px rgba(0,0,0,0.3)"></div>
<svg class="r" style="left:1418px;top:478px" width="40" height="40"><path d="M12 17 V12 H17 M23 12 H28 V17 M28 23 V28 H23 M17 28 H12 V23" fill="none" stroke="#666" stroke-width="2.2"/></svg>
<div class="r" style="left:1418px;top:813px;width:40px;height:81px;background:#fff;border-radius:2px;box-shadow:0 1px 4px rgba(0,0,0,0.3)"></div>
<div class="r" style="left:1424px;top:853px;width:28px;height:1px;background:#e6e6e6"></div>
<svg class="r" style="left:1418px;top:813px" width="40" height="81"><path d="M11 20.5 H29 M20 11.5 V29.5" stroke="#666" stroke-width="3.6"/><path d="M11 60.6 H29" stroke="#666" stroke-width="3.6"/></svg>
<div class="r" style="left:1029px;top:904px;width:439px;height:14px;background:rgba(245,245,245,0.75)"></div>
<div class="t" style="left:1032px;top:905.97px;font-size:10.2px;color:#222;font-weight:normal;letter-spacing:1.4px;">Keyboard shortcuts</div>
<div class="t" style="left:1157.3px;top:906.39px;font-size:9.7px;color:#222;font-weight:normal;letter-spacing:0px;">Map data ©2022 Google, INEGI</div>
<div class="t" style="left:1308px;top:906.13px;font-size:10px;color:#222;font-weight:normal;letter-spacing:0px;">Terms of Use</div>
<div class="t" style="left:1379.5px;top:906.30px;font-size:9.8px;color:#222;font-weight:normal;letter-spacing:0px;">Report a map error</div>
<svg class="r" style="left:796px;top:893px" width="80" height="24"><text x="1.5" y="18" font-family="Liberation Sans" font-size="18.5" font-weight="bold" letter-spacing="-0.3" stroke="#fff" stroke-width="1.6" paint-order="stroke"><tspan fill="#4285F4">G</tspan><tspan fill="#EA4335">o</tspan><tspan fill="#FBBC05">o</tspan><tspan fill="#4285F4">g</tspan><tspan fill="#34A853">l</tspan><tspan fill="#EA4335">e</tspan></text></svg>
<svg class="r" style="left:0;top:0;pointer-events:none" width="1914" height="933"><defs><clipPath id="mc"><rect x="788" y="468" width="680" height="450"/></clipPath></defs><g clip-path="url(#mc)"><path d="M1261,814.6999999999999 C1259,806.6999999999999 1250.9,797.3 1250.9,791.3 A10.1,10.1 0 1 1 1271.1,791.3 C1271.1,797.3 1263,806.6999999999999 1261,814.6999999999999 Z" fill="#1c6a3f" stroke="#111" stroke-width="1.1"/><circle cx="1261" cy="791.3" r="3.1" fill="#dfe1e3" stroke="#fff" stroke-width="1.3"/><path d="M1004,821.9 C1002,813.9 993.9,804.5 993.9,798.5 A10.1,10.1 0 1 1 1014.1,798.5 C1014.1,804.5 1006,813.9 1004,821.9 Z" fill="#1c6a3f" stroke="#111" stroke-width="1.1"/><circle cx="1004" cy="798.5" r="3.1" fill="#dfe1e3" stroke="#fff" stroke-width="1.3"/><path d="M994,839.4 C992,831.4 983.9,822 983.9,816 A10.1,10.1 0 1 1 1004.1,816 C1004.1,822 996,831.4 994,839.4 Z" fill="#1c6a3f" stroke="#111" stroke-width="1.1"/><circle cx="994" cy="816" r="3.1" fill="#dfe1e3" stroke="#fff" stroke-width="1.3"/><path d="M1079,828.4 C1077,820.4 1068.9,811 1068.9,805 A10.1,10.1 0 1 1 1089.1,805 C1089.1,811 1081,820.4 1079,828.4 Z" fill="#1c6a3f" stroke="#111" stroke-width="1.1"/><circle cx="1079" cy="805" r="3.1" fill="#dfe1e3" stroke="#fff" stroke-width="1.3"/><path d="M1079,857.4 C1077,849.4 1068.9,840 1068.9,834 A10.1,10.1 0 1 1 1089.1,834 C1089.1,840 1081,849.4 1079,857.4 Z" fill="#1c6a3f" stroke="#111" stroke-width="1.1"/><circle cx="1079" cy="834" r="3.1" fill="#dfe1e3" stroke="#fff" stroke-width="1.3"/><path d="M1135.6,899.1 C1133.6,891.1 1125.5,881.7 1125.5,875.7 A10.1,10.1 0 1 1 1145.6999999999998,875.7 C1145.6999999999998,881.7 1137.6,891.1 1135.6,899.1 Z" fill="#1c6a3f" stroke="#111" stroke-width="1.1"/><circle cx="1135.6" cy="875.7" r="3.1" fill="#dfe1e3" stroke="#fff" stroke-width="1.3"/><path d="M1131,907.1999999999999 C1129,899.1999999999999 1120.9,889.8 1120.9,883.8 A10.1,10.1 0 1 1 1141.1,883.8 C1141.1,889.8 1133,899.1999999999999 1131,907.1999999999999 Z" fill="#1c6a3f" stroke="#111" stroke-width="1.1"/><circle cx="1131" cy="883.8" r="3.1" fill="#dfe1e3" stroke="#fff" stroke-width="1.3"/><path d="M1020,941.4 C1018,933.4 1009.9,924 1009.9,918 A10.1,10.1 0 1 1 1030.1,918 C1030.1,924 1022,933.4 1020,941.4 Z" fill="#1c6a3f" stroke="#111" stroke-width="1.1"/><circle cx="1020" cy="918" r="3.1" fill="#dfe1e3" stroke="#fff" stroke-width="1.3"/></g></svg>
<div class="r" style="left:1133px;top:528px;width:257px;height:241px;background:#fff;border-radius:8px;box-shadow:0 2px 7px 1px rgba(0,0,0,0.3)"></div>
<svg class="r" style="left:1240px;top:766px" width="44" height="16"><path d="M9 2 L21 14 L33 2 Z" fill="#fff"/></svg>
<svg class="r" style="left:1372px;top:529px" width="16" height="16"><path d="M4 4 L12 12 M12 4 L4 12" stroke="#666" stroke-width="1.4"/></svg>
<div class="t" style="left:1145.2px;top:541.74px;font-size:13.3px;color:#111;font-weight:bold;letter-spacing:0px;">Concentra Medical Center -</div>
<div class="t" style="left:1145.2px;top:557.54px;font-size:13.3px;color:#111;font-weight:bold;letter-spacing:0px;">McCarty</div>
<div class="t" style="left:1145.2px;top:579.24px;font-size:12px;color:#222;font-weight:normal;letter-spacing:0px;">8799 NORTH LOOP E</div>
<div class="t" style="left:1145.2px;top:597.44px;font-size:12px;color:#222;font-weight:normal;letter-spacing:0px;">STE 110</div>
<div class="t" style="left:1145.2px;top:615.74px;font-size:12px;color:#222;font-weight:normal;letter-spacing:0px;">HOUSTON, TX, 77029</div>
<div class="t" style="left:1145.2px;top:641.08px;font-size:12.9px;color:#111;font-weight:normal;letter-spacing:0px;-webkit-text-stroke:0.45px #111">Distance: 6 miles</div>
<div class="t" style="left:1145.2px;top:667.16px;font-size:12.8px;color:#222;font-weight:normal;letter-spacing:0px;">Phone: 7136741114</div>
<div class="t" style="left:1145.2px;top:693.03px;font-size:12.6px;color:#222;font-weight:normal;letter-spacing:-0.1px;">M-F 8:00 am-5:00 pm, Sa,Su Closed</div>
<div class="r" style="left:1182px;top:725px;width:153px;height:29px;background:#0f6535;border-radius:3px"></div>
<div class="t" style="left:1196px;top:732.93px;font-size:11.9px;color:#fff;font-weight:normal;letter-spacing:1.93px;-webkit-text-stroke:0.4px #fff;transform:scaleX(0.87);transform-origin:0 0">CHOOSE LOCATION</div>
<div class="r" style="left:1905px;top:327px;width:9px;height:603px;background:#f1f1f1;border-radius:5px 0 0 0"></div>
<div class="r" style="left:0px;top:930.5px;width:1914px;height:2.5px;background:#0d101a"></div>
<svg class="r" style="left:0;top:915px" width="1914" height="18"><path d="M1902,16 Q1913,16 1914,5 L1914,18 L1902,18 Z" fill="#0d101a"/><path d="M0,12.5 Q0.5,15.5 5,15.6 L5,18 L0,18 Z" fill="#0d101a"/></svg>
</body></html>
